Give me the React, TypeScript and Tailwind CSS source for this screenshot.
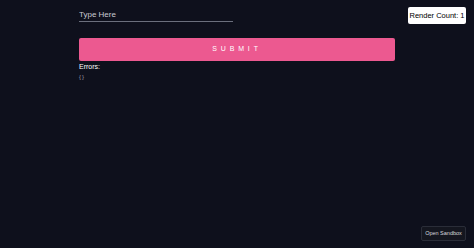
export default function App() {
  return (
    <div className="relative h-[248px] w-full overflow-hidden bg-[#0e101c] font-['Liberation_Sans',Arial,sans-serif] text-white">
      <form className="mx-auto flex w-[316px] flex-col pt-[9px]">
        <input
          type="text"
          placeholder="Type Here"
          className="h-[13px] w-[154px] border-b border-[#6b6f7d] bg-transparent pb-[1px] text-[8px] text-white outline-none placeholder:text-[#c9cbd2]"
        />
        <button
          type="button"
          className="mt-[16px] h-[23px] w-full rounded-[2px] bg-[#ec5990] text-[7px] tracking-[0.55em] text-white"
        >
          SUBMIT
        </button>
        <div className="mt-[1px] text-[7px] leading-[9px] text-white">Errors:</div>
        <pre className="mt-[2px] font-['Liberation_Sans',sans-serif] text-[6px] leading-[8px] tracking-[1px] text-[#9a9ca6]">{"{}"}</pre>
      </form>
      <div className="absolute right-[8px] top-[7px] flex h-[17px] w-[58px] items-center justify-center rounded-[2px] bg-white text-[7.5px] text-black">
        Render Count: 1
      </div>
      <div className="absolute bottom-[7px] right-[8px] flex h-[15px] w-[45px] items-center justify-center rounded-[2px] border border-[#2a2d38] bg-[#14161f] text-[5.5px] text-[#d8d9de]">
        Open Sandbox
      </div>
    </div>
  );
}
